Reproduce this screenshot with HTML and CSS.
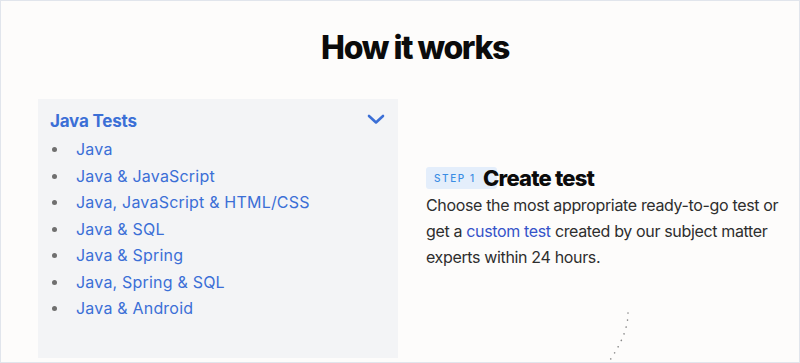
FILE: index.html
```html
<!DOCTYPE html>
<html lang="en">
<head>
  <meta charset="UTF-8" />
  <meta name="viewport" content="width=device-width, initial-scale=1.0"/>
  <title>How it works</title>
  <link rel="stylesheet" href="styles.css">
</head>
<body>
  <section class="how">
    <h1>How it works</h1>

    <div class="steps">
      <div class="tests">
        <div class="tests-head">
          <span>Java Tests</span>
          <svg width="18" height="12" viewBox="0 0 18 12" fill="none" xmlns="http://www.w3.org/2000/svg">
            <path d="M2 3L9 9.5L16 3" stroke="#3b6fd6" stroke-width="2.6" stroke-linecap="round" stroke-linejoin="round"/>
          </svg>
        </div>
        <ul class="tests-list">
          <li><a href="#">Java</a></li>
          <li><a href="#">Java &amp; JavaScript</a></li>
          <li><a href="#">Java, JavaScript &amp; HTML/CSS</a></li>
          <li><a href="#">Java &amp; SQL</a></li>
          <li><a href="#">Java &amp; Spring</a></li>
          <li><a href="#">Java, Spring &amp; SQL</a></li>
          <li><a href="#">Java &amp; Android</a></li>
        </ul>
      </div>

      <div class="step">
        <div class="step-title">
          <span class="step-badge">STEP 1</span>
          <h2>Create test</h2>
        </div>
        <p>Choose the most appropriate ready-to-go test or get a <a href="#">custom test</a> created by our subject matter experts within 24 hours.</p>
      </div>
    </div>

    <svg class="trail" width="40" height="60" viewBox="0 0 40 60" fill="none" xmlns="http://www.w3.org/2000/svg">
      <path d="M27 12C27 27 20 43 9 59" stroke="#8a8a8a" stroke-width="1.6" stroke-linecap="round" stroke-dasharray="0.1 7"/>
    </svg>
  </section>
</body>
</html>
```

FILE: styles.css
```css
:root {
  --blue: #3b6fd6;
  --page: #fdfcfb;
  --panel: #f3f4f6;
  --border: #e1e5ec;
  --text: #2e2e2e;
}

* {
  box-sizing: border-box;
  margin: 0;
  padding: 0;
}

body {
  font-family: 'Inter', 'Liberation Sans', sans-serif;
  background-color: var(--page);
  color: var(--text);
}

.how {
  position: relative;
  height: 363px;
  border: 1px solid var(--border);
  overflow: hidden;
}

h1 {
  text-align: center;
  font-size: 32px;
  font-weight: 800;
  letter-spacing: -1.4px;
  color: #0b0b0b;
  padding: 28px 0 0 30px;
  line-height: 38px;
}

.steps {
  display: grid;
  grid-template-columns: 360px 1fr;
  gap: 28px;
  padding-left: 37px;
  margin-top: 32px;
}

.tests {
  background-color: var(--panel);
  height: 259px;
  padding: 10px 13px 0 12px;
}

.tests-head {
  display: flex;
  justify-content: space-between;
  align-items: center;
  color: var(--blue);
  font-size: 17px;
  font-weight: 700;
  letter-spacing: -0.2px;
  line-height: 24px;
}

.tests-head svg {
  margin-top: -4px;
}

.tests-list {
  list-style: none;
  margin-top: 3px;
}

.tests-list li {
  display: flex;
  align-items: center;
  height: 26.5px;
  font-size: 16px;
  letter-spacing: 0.2px;
  padding-left: 26px;
  position: relative;
}

.tests-list li::before {
  content: '';
  position: absolute;
  left: 2px;
  top: 11px;
  width: 5px;
  height: 5px;
  border-radius: 50%;
  background-color: #6f6f6f;
}

.tests-list a {
  color: var(--blue);
  text-decoration: none;
}

.step {
  padding-top: 67px;
  max-width: 368px;
}

.step-title {
  display: flex;
  align-items: center;
}

.step-badge {
  background-color: #e4eefb;
  color: #3a8de4;
  font-size: 10px;
  font-weight: 500;
  letter-spacing: 1.6px;
  padding-left: 8px;
  width: 71px;
  flex-shrink: 0;
  height: 22px;
  line-height: 22px;
  border-radius: 3px;
}

h2 {
  font-size: 22px;
  font-weight: 800;
  letter-spacing: -0.8px;
  color: #0b0b0b;
  margin-left: -14px;
  line-height: 24px;
}

.step p {
  font-size: 16px;
  letter-spacing: -0.35px;
  line-height: 26px;
  margin-top: 2px;
}

.step p a {
  color: #3553c9;
  text-decoration: none;
}

.trail {
  position: absolute;
  left: 600px;
  top: 300px;
}
```
